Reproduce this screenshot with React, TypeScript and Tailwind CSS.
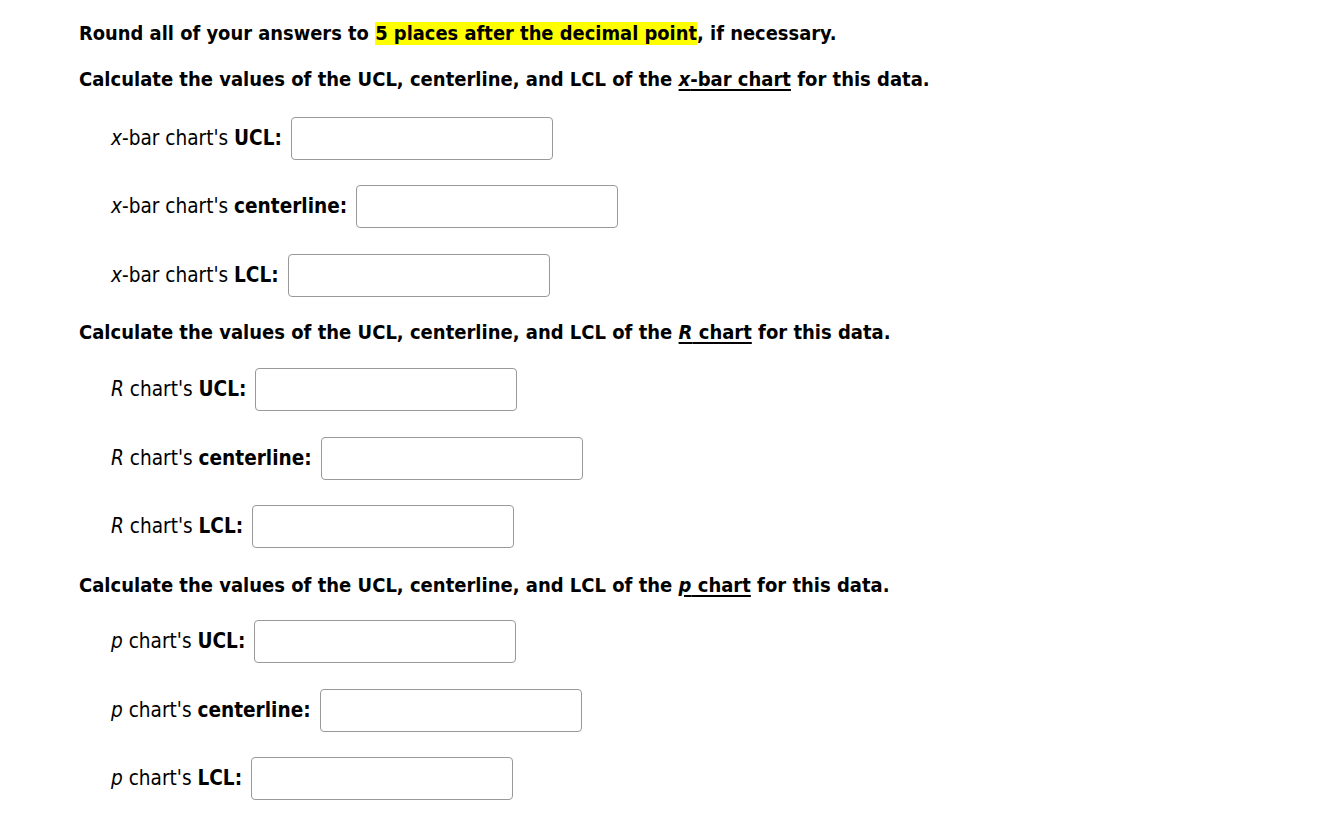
import React from 'react';

function FieldRow({ sym, rest, label, top }: { sym: string; rest: string; label: string; top: string }) {
  return (
    <div className={`flex items-center pl-[32px] ${top}`}>
      <span className="text-[20.6px] text-black">
        <i>{sym}</i>
        {rest} <b>{label}:</b>
      </span>
      <input
        type="text"
        className="ml-[9px] h-[43px] w-[262px] rounded-[4px] border border-[#999] bg-white outline-none"
      />
    </div>
  );
}

function Heading({ sym, name, top }: { sym: string; name: string; top: string }) {
  return (
    <div className={`${top} h-[24px] text-[20px] font-bold leading-[24px] text-black`}>
      Calculate the values of the UCL, centerline, and LCL of the{' '}
      <span className="underline decoration-2 underline-offset-[3px]">
        <i>{sym}</i>
        {name}
      </span>{' '}
      for this data.
    </div>
  );
}

interface SectionProps {
  sym: string;
  name: string;
  rest: string;
  top: string;
  gaps: [string, string, string];
}

function Section({ sym, name, rest, top, gaps }: SectionProps) {
  return (
    <div>
      <Heading sym={sym} name={name} top={top} />
      <FieldRow sym={sym} rest={rest} label="UCL" top={gaps[0]} />
      <FieldRow sym={sym} rest={rest} label="centerline" top={gaps[1]} />
      <FieldRow sym={sym} rest={rest} label="LCL" top={gaps[2]} />
    </div>
  );
}

export default function App() {
  return (
    <div
      className="min-h-[835px] w-full bg-white pl-[79px] pt-[22px]"
      style={{ fontFamily: '"DejaVu Sans Condensed", "DejaVu Sans", sans-serif' }}
    >
      <div className="h-[24px] text-[19.9px] font-bold leading-[24px] text-black">
        Round all of your answers to{' '}
        <span className="bg-[#ffff00]">5 places after the decimal point</span>, if necessary.
      </div>
      <Section
        sym="x"
        name="-bar chart"
        rest="-bar chart's"
        top="mt-[21px]"
        gaps={['mt-[26px]', 'mt-[25px]', 'mt-[26px]']}
      />
      <Section
        sym="R"
        name=" chart"
        rest=" chart's"
        top="mt-[23px]"
        gaps={['mt-[24px]', 'mt-[26px]', 'mt-[25px]']}
      />
      <Section
        sym="p"
        name=" chart"
        rest=" chart's"
        top="mt-[25px]"
        gaps={['mt-[23px]', 'mt-[26px]', 'mt-[25px]']}
      />
    </div>
  );
}
